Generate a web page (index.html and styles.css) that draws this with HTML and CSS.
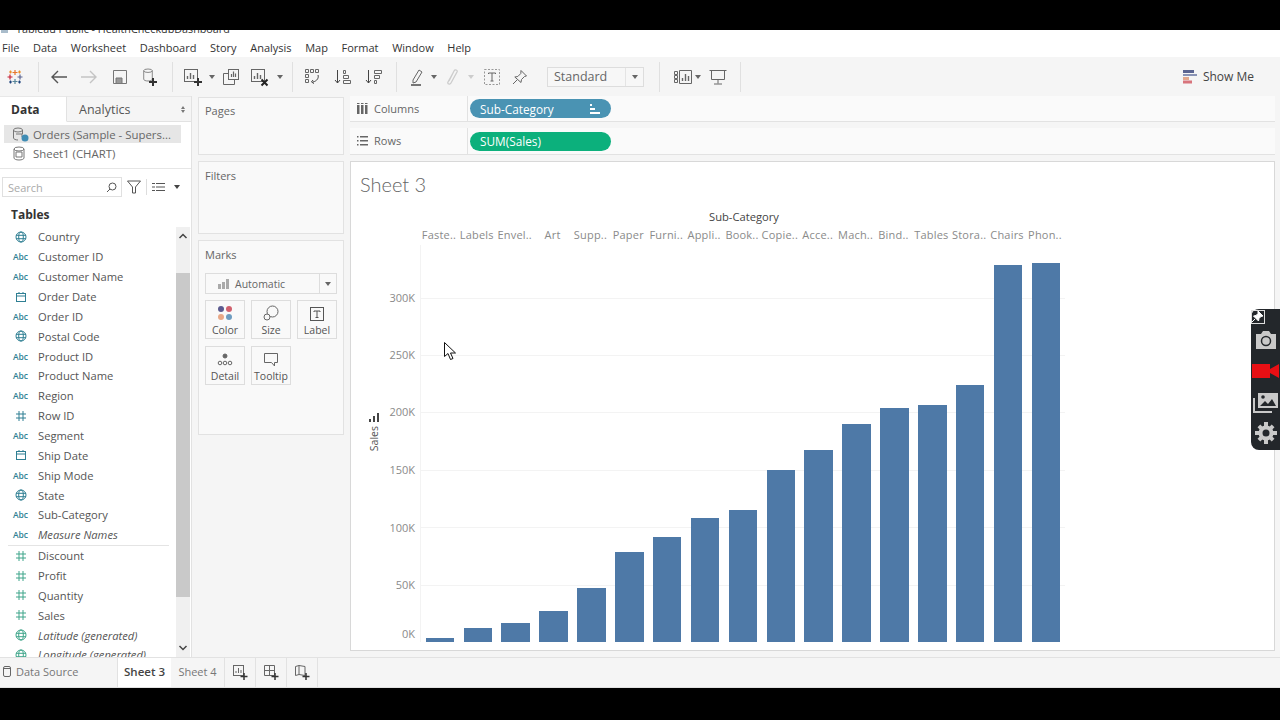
FILE: index.html
```html
<!DOCTYPE html>
<html lang="en">
<head>
    <meta charset="UTF-8">
    <title>Tableau Public - HealthCheckupDashboard</title>
    <link rel="stylesheet" href="styles.css">
</head>
<body>
    <svg class="defs" width="0" height="0">
        <symbol id="globe" viewBox="0 0 12 12"><g fill="none" stroke="currentColor"><circle cx="6" cy="6" r="5"/><ellipse cx="6" cy="6" rx="2.3" ry="5"/><path d="M1 4.3h10M1 7.7h10"/></g></symbol>
        <symbol id="cal" viewBox="0 0 12 12"><g fill="none" stroke="currentColor"><rect x="1.5" y="2.5" width="9" height="8"/><path d="M1.5 5h9M4 1v2M8 1v2"/></g></symbol>
        <symbol id="hash" viewBox="0 0 12 12"><path d="M4 1v10M8 1v10M1 4h10M1 8h10" fill="none" stroke="currentColor"/></symbol>
        <symbol id="sheet-plus" viewBox="0 0 20 20"><g fill="none" stroke="#666"><rect x="1.5" y="2.5" width="13" height="12"/></g><path d="M4.5 12V9M7.5 12V6M10.5 12V8" stroke="#666" stroke-width="1.4"/><path d="M15 11v8M11 15h8" stroke="#333" stroke-width="2"/></symbol>
        <symbol id="db" viewBox="0 0 14 16"><g fill="none" stroke="#777"><ellipse cx="7" cy="3" rx="5" ry="2"/><path d="M2 3v10c0 1 2 2 5 2s5-1 5-2V3"/></g></symbol>
    </svg>

    <div class="letterbox-top"></div>

    <div class="window">
        <div class="titlebar"><span class="title-icon"></span><div class="titlebar-text">Tableau Public - HealthCheckupDashboard</div></div>

        <nav class="menubar">
            <span>File</span><span>Data</span><span>Worksheet</span><span>Dashboard</span><span>Story</span><span>Analysis</span><span>Map</span><span>Format</span><span>Window</span><span>Help</span>
        </nav>

        <!-- Toolbar -->
        <div class="toolbar">
            <div class="tb">
                <svg width="16" height="16" viewBox="0 0 16 16" fill="none" stroke-width="1.2"><path d="M8 1v5M5.5 3.5h5" stroke="#e8762c"/><path d="M8 10v5M5.5 12.5h5" stroke="#59879b"/><path d="M3 5.5v5M.5 8h5" stroke="#c72035"/><path d="M13 5.5v5M10.5 8h5" stroke="#5b6591"/><path d="M3.5 1.5v3M2 3h3M12.5 1.5v3M11 3h3" stroke="#eb912b"/><path d="M3.5 11.5v3M2 13h3M12.5 11.5v3M11 13h3" stroke="#1f447e"/></svg>
            </div>
            <div class="sep sep-first"></div>
            <div class="tb tb-gap5"><svg width="18" height="14" viewBox="0 0 18 14" fill="none" stroke="#555" stroke-width="1.4"><path d="M17 7H2M8 1 2 7l6 6"/></svg></div>
            <div class="tb"><svg width="18" height="14" viewBox="0 0 18 14" fill="none" stroke="#c4c4c4" stroke-width="1.4"><path d="M1 7h15M10 1l6 6-6 6"/></svg></div>
            <div class="tb tb-gap1"><svg width="16" height="16" viewBox="0 0 16 16" fill="none" stroke="#777"><path d="M1.5 1.5h13v13h-13z"/><path d="M4 14V9h6v5" fill="#999"/></svg></div>
            <div class="tb"><svg width="17" height="18" viewBox="0 0 17 18"><use href="#db" width="12" height="14"/><path d="M11 10v8M7 14h8" stroke="#333" stroke-width="2"/></svg></div>
            <div class="sep sep-a"></div>
            <div class="tb tb-narrow tb-gap5"><svg width="20" height="20"><use href="#sheet-plus"/></svg></div>
            <div class="caret-box caret-box-small"><span class="caret"></span></div>
            <div class="tb tb-narrow"><svg width="18" height="18" viewBox="0 0 18 18" fill="none" stroke="#666"><rect x="6.5" y="1.5" width="10" height="10"/><path d="M6.5 5.5h-5v11h11v-5"/><path d="M9.5 9V6M11.5 9V3.5M13.5 9V5.5" stroke-width="1.2"/></svg></div>
            <div class="tb tb-narrow tb-gap1"><svg width="20" height="20" viewBox="0 0 20 20"><g fill="none" stroke="#666"><rect x="1.5" y="2.5" width="13" height="12"/></g><path d="M4.5 12V9M7.5 12V6M10.5 12V8" stroke="#666" stroke-width="1.4"/><path d="M11.5 12.5l6 6M17.5 12.5l-6 6" stroke="#222" stroke-width="2"/></svg></div>
            <div class="caret-box"><span class="caret"></span></div>
            <div class="sep sep-d"></div>
            <div class="tb tb-narrow"><svg width="17" height="17" viewBox="0 0 17 17" fill="none" stroke="#666"><path d="M1.5 1.5h3v3h-3zM6.5 1.5h3v3h-3zM11.5 1.5h3v3h-3zM1.5 6.5h3v3h-3zM1.5 11.5h3v3h-3z"/><path d="M14 7c1 3-1 6-5 7M9 12l-1.5 2L10 15.5" stroke="#444"/></svg></div>
            <div class="tb tb-gap2"><svg width="18" height="16" viewBox="0 0 18 16" fill="none" stroke="#666"><path d="M3.5 1v13M1 11l2.500 3L6 11" stroke="#444"/><path d="M9.5 1.5h2v3h-2zM9.5 6.5h5v3h-5zM9.5 11.5h7v3h-7z"/></svg></div>
            <div class="tb tb-gap1"><svg width="18" height="16" viewBox="0 0 18 16" fill="none" stroke="#666"><path d="M3.5 1v13M1 11l2.500 3L6 11" stroke="#444"/><path d="M9.5 1.5h7v3h-7zM9.5 6.5h5v3h-5zM9.5 11.5h2v3h-2z"/></svg></div>
            <div class="sep sep-b"></div>
            <div class="tb tb-pen tb-gap3"><svg width="14" height="18" viewBox="0 0 14 18" fill="none" stroke="#666"><path d="M3 12 9 2l3 2-6 10-3 1z"/><path d="M1 17h10" stroke="#555" stroke-width="1.6"/></svg></div>
            <div class="caret-box caret-box-small"><span class="caret"></span></div>
            <div class="tb tb-slim tb-gap3"><svg width="12" height="18" viewBox="0 0 12 18" fill="none" stroke="#ccc" stroke-width="1.3"><path d="M3 13 8 3c1-2 4-1 3 1l-6 11c-1 2-4 1-3-1l5-9"/></svg></div>
            <div class="caret-box tb-gap3"><span class="caret caret-off"></span></div>
            <div class="tb tb-slim tb-gap5"><svg width="16" height="16" viewBox="0 0 16 16" fill="none"><path d="M.5.5h15v15H.5z" stroke="#999" stroke-dasharray="2 1.5"/><path d="M4.5 5V4h7v1M8 4v8M6.5 12h3" stroke="#666"/></svg></div>
            <div class="tb tb-slim tb-gap8"><svg width="16" height="16" viewBox="0 0 16 16" fill="none" stroke="#666"><path d="M9 1.5 14.500 7l-2 .5-3 3-.5 3L2.800 8l3-.5 3-3zM5 11l-4 4"/></svg></div>
            <div class="std-select"><span>Standard</span><span class="std-arrow"><span class="caret"></span></span></div>
            <div class="sep sep-c"></div>
            <div class="tb tb-slim tb-gap8"><svg width="20" height="16" viewBox="0 0 20 16" fill="none" stroke="#666"><path d="M1.5 2.5h3v3h-3zM1.5 6.5h3v3h-3zM1.5 10.5h3v3h-3zM6.5 1.5h12v13h-12z"/><path d="M9.5 12V9M12.5 12V5M15.5 12V7" stroke-width="1.4"/></svg></div>
            <div class="caret-box caret-box-small"><span class="caret"></span></div>
            <div class="tb tb-narrow tb-gap1"><svg width="18" height="16" viewBox="0 0 18 16" fill="none" stroke="#666"><path d="M.5 1.500h17M2.500 1.500v9h13v-9M9 10.500v4M5 15h8"/></svg></div>
            <div class="sep sep-e"></div>
            <div class="show-me">
                <svg width="15" height="14" viewBox="0 0 15 14"><rect y="0" width="11" height="3" fill="#5b6591"/><rect y="4" width="14" height="2" fill="#8a94b5"/><rect y="7" width="6" height="3" fill="#e3a88c"/><rect y="10.5" width="9" height="3" fill="#d8747c"/></svg>
                <span>Show Me</span>
            </div>
        </div>

        <div class="workspace">
            <!-- Data pane -->
            <aside class="data-pane">
                <div class="pane-tabs">
                    <div class="pane-tab pane-tab-active">Data</div>
                    <div class="pane-tab">Analytics<span class="updown"></span></div>
                </div>
                <div class="sources">
                    <div class="source source-active">
                        <svg width="17" height="15" viewBox="0 0 17 15" fill="none" stroke="#777"><ellipse cx="6" cy="3" rx="4.5" ry="2"/><path d="M1.500 3v8c0 1 2 2 4.500 2M10.500 3v4M4 7h6v3"/><circle cx="13" cy="11" r="3.5" fill="#3f8cb4" stroke="none"/></svg>
                        <span>Orders (Sample - Supers...</span>
                    </div>
                    <div class="source">
                        <svg width="17" height="15" viewBox="0 0 17 15" fill="none" stroke="#777"><ellipse cx="7" cy="3" rx="5" ry="2"/><path d="M2 3v9c0 1 2 2 5 2s5-1 5-2V3M4 6h6v5H4z"/></svg>
                        <span>Sheet1 (CHART)</span>
                    </div>
                </div>
                <div class="search-row">
                    <div class="search-box"><span>Search</span>
                        <svg width="11" height="11" viewBox="0 0 11 11" fill="none" stroke="#555"><circle cx="6.5" cy="4.5" r="3.5"/><path d="M4 7 1 10"/></svg>
                    </div>
                    <svg class="filter-icon" width="14" height="14" viewBox="0 0 14 14" fill="none" stroke="#555"><path d="M.5 1h13L8.500 7v6h-3V7z"/></svg>
                    <span class="search-sep"></span>
                    <svg width="13" height="10" viewBox="0 0 13 10" stroke="#555"><path d="M0 1.500h3M0 5h3M0 8.500h3M4 1.500h9M4 5h9M4 8.500h9"/></svg>
                    <span class="caret caret-dark"></span>
                </div>
                <div class="tables-head">Tables</div>
                <div class="fields-wrap">
                    <ul class="fields">
                        <li><span class="fi dim"><svg width="12" height="12"><use href="#globe"/></svg></span>Country</li>
                        <li><span class="fi abc">Abc</span>Customer ID</li>
                        <li><span class="fi abc">Abc</span>Customer Name</li>
                        <li><span class="fi dim"><svg width="12" height="12"><use href="#cal"/></svg></span>Order Date</li>
                        <li><span class="fi abc">Abc</span>Order ID</li>
                        <li><span class="fi dim"><svg width="12" height="12"><use href="#globe"/></svg></span>Postal Code</li>
                        <li><span class="fi abc">Abc</span>Product ID</li>
                        <li><span class="fi abc">Abc</span>Product Name</li>
                        <li><span class="fi abc">Abc</span>Region</li>
                        <li><span class="fi dim"><svg width="12" height="12"><use href="#hash"/></svg></span>Row ID</li>
                        <li><span class="fi abc">Abc</span>Segment</li>
                        <li><span class="fi dim"><svg width="12" height="12"><use href="#cal"/></svg></span>Ship Date</li>
                        <li><span class="fi abc">Abc</span>Ship Mode</li>
                        <li><span class="fi dim"><svg width="12" height="12"><use href="#globe"/></svg></span>State</li>
                        <li><span class="fi abc">Abc</span>Sub-Category</li>
                        <li class="calc"><span class="fi abc">Abc</span>Measure Names</li>
                        <li class="field-divider"></li>
                        <li><span class="fi mea"><svg width="12" height="12"><use href="#hash"/></svg></span>Discount</li>
                        <li><span class="fi mea"><svg width="12" height="12"><use href="#hash"/></svg></span>Profit</li>
                        <li><span class="fi mea"><svg width="12" height="12"><use href="#hash"/></svg></span>Quantity</li>
                        <li><span class="fi mea"><svg width="12" height="12"><use href="#hash"/></svg></span>Sales</li>
                        <li class="calc"><span class="fi mea"><svg width="12" height="12"><use href="#globe"/></svg></span>Latitude (generated)</li>
                        <li class="calc"><span class="fi mea"><svg width="12" height="12"><use href="#globe"/></svg></span>Longitude (generated)</li>
                    </ul>
                    <div class="scrollbar">
                        <svg class="scroll-btn" width="14" height="18" viewBox="0 0 14 18" fill="none" stroke="#444" stroke-width="1.5"><path d="M3.500 11 7 7.500l3.500 3.500"/></svg>
                        <div class="scroll-track"><div class="scroll-thumb"></div></div>
                        <svg class="scroll-btn" width="14" height="18" viewBox="0 0 14 18" fill="none" stroke="#444" stroke-width="1.5"><path d="M3.500 7 7 10.500 10.500 7"/></svg>
                    </div>
                </div>
            </aside>

            <!-- Pages / Filters / Marks -->
            <div class="cards">
                <section class="card card-pages"><h3>Pages</h3></section>
                <section class="card card-filters"><h3>Filters</h3></section>
                <section class="card card-marks">
                    <h3>Marks</h3>
                    <div class="mark-select">
                        <svg width="12" height="10" viewBox="0 0 12 10" fill="#aaa"><rect x="0" y="5" width="3" height="5"/><rect x="4" y="3" width="3" height="7"/><rect x="8" y="0" width="3" height="10"/></svg>
                        <span class="mark-name">Automatic</span>
                        <span class="mark-arrow"><span class="caret"></span></span>
                    </div>
                    <div class="mark-grid">
                        <div class="mark-btn">
                            <svg width="16" height="16" viewBox="0 0 16 16"><circle cx="4" cy="4" r="3" fill="#5b5a8f"/><circle cx="12" cy="4" r="3" fill="#d0606d"/><circle cx="4" cy="12" r="3" fill="#e8a887"/><circle cx="12" cy="12" r="3" fill="#6d9cc0"/></svg>
                            <span>Color</span>
                        </div>
                        <div class="mark-btn">
                            <svg width="16" height="16" viewBox="0 0 16 16" fill="none" stroke="#666"><circle cx="9.5" cy="6.5" r="5.5"/><circle cx="4" cy="12" r="3" fill="#f9f9f9"/></svg>
                            <span>Size</span>
                        </div>
                        <div class="mark-btn">
                            <svg width="14" height="14" viewBox="0 0 14 14" fill="none" stroke="#555"><rect x=".5" y=".5" width="13" height="13"/><path d="M4 5V4h6v1M7 4v6.500M5.500 10.500h3"/></svg>
                            <span>Label</span>
                        </div>
                        <div class="mark-btn">
                            <svg width="16" height="14" viewBox="0 0 16 14" fill="none" stroke="#666"><circle cx="8" cy="3" r="2" fill="#666"/><circle cx="3" cy="10" r="1.8"/><circle cx="8" cy="10" r="1.8"/><circle cx="13" cy="10" r="1.8"/></svg>
                            <span>Detail</span>
                        </div>
                        <div class="mark-btn">
                            <svg width="16" height="14" viewBox="0 0 16 14" fill="none" stroke="#666"><path d="M1.500.5h13v9h-3v3.500l-3-3.500h-7z"/></svg>
                            <span>Tooltip</span>
                        </div>
                    </div>
                </section>
            </div>

            <!-- Shelves and view -->
            <main class="main">
                <div class="shelf">
                    <div class="shelf-label">
                        <svg width="11" height="11" viewBox="0 0 11 11" fill="#666"><rect x="0" y="2" width="2.5" height="9"/><rect x="4" y="2" width="2.5" height="9"/><rect x="8" y="2" width="2.5" height="9"/><rect x="0" y="0" width="2.5" height="1"/><rect x="4" y="0" width="2.5" height="1"/><rect x="8" y="0" width="2.5" height="1"/></svg>
                        Columns
                    </div>
                    <div class="pill pill-blue">Sub-Category
                        <svg width="11" height="10" viewBox="0 0 11 10" fill="#fff"><rect width="2" height="2"/><rect y="4" width="5" height="2"/><rect y="8" width="10" height="2"/></svg>
                    </div>
                </div>
                <div class="shelf shelf-rows">
                    <div class="shelf-label">
                        <svg width="11" height="11" viewBox="0 0 11 11" fill="#666"><rect y="1" width="1.5" height="1.5"/><rect y="5" width="1.5" height="1.5"/><rect y="9" width="1.5" height="1.5"/><rect x="3" y="1" width="8" height="1.5"/><rect x="3" y="5" width="8" height="1.5"/><rect x="3" y="9" width="8" height="1.5"/></svg>
                        Rows
                    </div>
                    <div class="pill pill-green">SUM(Sales)</div>
                </div>

                <div class="view">
                    <div class="view-title">Sheet 3</div>
                    <div class="chart">
                        <div class="chart-side">
                            <div class="axis-title">
                                <svg width="11" height="9" viewBox="0 0 11 9" fill="#444"><rect y="6" width="2" height="3"/><rect x="4" y="3" width="2" height="6"/><rect x="8" width="2" height="9"/></svg>
                                <span>Sales</span>
                            </div>
                            <span class="tick" style="top:46px">300K</span>
                            <span class="tick" style="top:103px">250K</span>
                            <span class="tick" style="top:160px">200K</span>
                            <span class="tick" style="top:218px">150K</span>
                            <span class="tick" style="top:276px">100K</span>
                            <span class="tick" style="top:333px">50K</span>
                            <span class="tick" style="top:382px">0K</span>
                        </div>
                        <div class="chart-body">
                            <div class="chart-head">Sub-Category</div>
                            <div class="cats">
                                <span>Faste..</span><span>Labels</span><span>Envel..</span><span>Art</span><span>Supp..</span><span>Paper</span><span>Furni..</span><span>Appli..</span><span>Book..</span><span>Copie..</span><span>Acce..</span><span>Mach..</span><span>Bind..</span><span>Tables</span><span>Stora..</span><span>Chairs</span><span>Phon..</span>
                            </div>
                            <div class="plot">
                                <i class="grid-line" style="top:53px"></i>
                                <i class="grid-line" style="top:110px"></i>
                                <i class="grid-line" style="top:167px"></i>
                                <i class="grid-line" style="top:225px"></i>
                                <i class="grid-line" style="top:282px"></i>
                                <i class="grid-line" style="top:340px"></i>
                                <div class="bar-cell"><b style="height:4px"></b></div>
                                <div class="bar-cell"><b style="height:14px"></b></div>
                                <div class="bar-cell"><b style="height:19px"></b></div>
                                <div class="bar-cell"><b style="height:31px"></b></div>
                                <div class="bar-cell"><b style="height:54px"></b></div>
                                <div class="bar-cell"><b style="height:90px"></b></div>
                                <div class="bar-cell"><b style="height:105px"></b></div>
                                <div class="bar-cell"><b style="height:124px"></b></div>
                                <div class="bar-cell"><b style="height:132px"></b></div>
                                <div class="bar-cell"><b style="height:172px"></b></div>
                                <div class="bar-cell"><b style="height:192px"></b></div>
                                <div class="bar-cell"><b style="height:218px"></b></div>
                                <div class="bar-cell"><b style="height:234px"></b></div>
                                <div class="bar-cell"><b style="height:237px"></b></div>
                                <div class="bar-cell"><b style="height:257px"></b></div>
                                <div class="bar-cell"><b style="height:377px"></b></div>
                                <div class="bar-cell"><b style="height:379px"></b></div>
                            </div>
                        </div>
                    </div>
                </div>
            </main>
        </div>

        <!-- Sheet tabs -->
        <div class="tabbar">
            <div class="tab tab-source">
                <svg width="8" height="11" viewBox="0 0 8 11" fill="none" stroke="#666"><rect x=".5" y=".5" width="7" height="10" rx="1.5"/><path d="M.5 2.500h7"/></svg>
                Data Source
            </div>
            <div class="tab tab-active">Sheet 3</div>
            <div class="tab tab-sheet">Sheet 4</div>
            <div class="tab-add">
                <svg width="15" height="15" viewBox="0 0 15 15" fill="none" stroke="#666"><rect x=".5" y=".5" width="10" height="10"/><path d="M3 8V6M5.500 8V3M8 8V5"/><path d="M11 8v7M7.500 11.500h7" stroke="#333" stroke-width="1.5"/></svg>
            </div>
            <div class="tab-add">
                <svg width="15" height="15" viewBox="0 0 15 15" fill="none" stroke="#666"><path d="M.5.5h10v10H.5zM5.500.5v10M.5 5.500h10"/><path d="M11 8v7M7.500 11.500h7" stroke="#333" stroke-width="1.5"/></svg>
            </div>
            <div class="tab-add">
                <svg width="15" height="15" viewBox="0 0 15 15" fill="none" stroke="#666"><path d="M.5 1.500 4 .5l6 1v9l-6-1-3.500 1zM4 .5v9"/><path d="M11 8v7M7.500 11.500h7" stroke="#333" stroke-width="1.5"/></svg>
            </div>
        </div>
    </div>

    <div class="letterbox-bottom"></div>

    <!-- Screen recorder widget and mouse pointer sit over the window -->
    <div class="recorder">
        <div class="rec-pin"><svg width="11" height="11" viewBox="0 0 11 11" fill="#fff" stroke="#fff"><path d="M6 0l5 5-2 .5-2 2-.5 2.500L1.500 5l2.500-.5 2-2zM3 8l-3 3"/></svg></div>
        <svg width="22" height="20" viewBox="0 0 22 20"><path d="M1 4h5l2-3h6l2 3h5v15H1z" fill="#c9c9c9"/><circle cx="11" cy="11" r="4.5" fill="none" stroke="#23272b" stroke-width="1.5"/></svg>
        <svg width="27" height="16" viewBox="0 0 27 16"><path d="M0 1h18v14H0zM18 6l9-5v14l-9-5z" fill="#e80f14"/></svg>
        <svg width="25" height="21" viewBox="0 0 25 21" fill="none"><path d="M1 6v14h18" stroke="#c9c9c9" stroke-width="2"/><path d="M5 1h20v15H5z" fill="#c9c9c9"/><circle cx="10" cy="5" r="1.8" fill="#23272b"/><path d="M7 14l5-5 3 3 4-5 4 7z" fill="#23272b"/></svg>
        <svg class="rec-gear" width="22" height="22" viewBox="0 0 22 22"><circle cx="11" cy="11" r="5.5" fill="none" stroke="#c9c9c9" stroke-width="4"/><path d="M9 0h4v4H9zM9 18h4v4H9zM0 9h4v4H0zM18 9h4v4h-4zM2.500 5.300 5.300 2.500l2.500 2.500-2.800 2.800zM14.200 17l2.800-2.800 2.500 2.500-2.800 2.800zM2.500 16.700 5 14.200 7.800 17l-2.500 2.500zM14.200 5l2.500-2.500 2.800 2.800L17 7.800z" fill="#c9c9c9"/></svg>
    </div>
    <svg class="pointer" width="12" height="18" viewBox="0 0 12 18"><path d="M.5.500v14l3.500-3 2.500 6 2.500-1-2.500-5.500h5z" fill="#fff" stroke="#111"/></svg>
</body>
</html>
```

FILE: styles.css
```css
/* Page */
html, body {
    margin: 0;
    padding: 0;
    height: 720px;
    overflow: hidden;
    background-color: #000;
    font-family: "Open Sans", "Noto Sans", sans-serif;
    color: #555;
}

.defs {
    position: absolute;
}

.letterbox-top {
    height: 30px;
    background-color: #000;
}

.letterbox-bottom {
    height: 32px;
    background-color: #000;
}

.window {
    height: 658px;
    display: flex;
    flex-direction: column;
    background-color: #fff;
    overflow: hidden;
}

/* Title and menu */
.titlebar {
    height: 3px;
    flex: none;
    display: flex;
    gap: 8px;
    overflow: hidden;
    padding-left: 1px;
}

.title-icon {
    width: 7px;
    height: 3px;
    background-color: #a9bccb;
}

.titlebar-text {
    margin-top: -9px;
    font-size: 10.75px;
    line-height: 16px;
    color: #333;
}

.menubar {
    height: 24px;
    flex: none;
    box-sizing: border-box;
    display: flex;
    align-items: center;
    gap: 13.6px;
    padding: 5px 0 0 2px;
    font-size: 11px;
    color: #333;
}

/* Toolbar */
.toolbar {
    height: 39px;
    flex: none;
    display: flex;
    align-items: center;
    background-color: #f5f5f5;
}

.tb {
    width: 30px;
    height: 24px;
    flex: none;
    display: flex;
    align-items: center;
    justify-content: center;
}

.tb-narrow { width: 28px; }
.tb-pen { width: 24px; }
.tb-slim { width: 20px; }
.tb-gap1 { margin-left: 1px; }
.tb-gap2 { margin-left: 2px; }
.tb-gap3 { margin-left: 3px; }
.tb-gap5 { margin-left: 5px; }
.tb-gap8 { margin-left: 8px; }

.sep {
    width: 1px;
    height: 30px;
    flex: none;
    background-color: #e0e0e0;
}

.sep-first { margin-left: 8px; }
.sep-a { margin: 0 1px 0 7px; }
.sep-b { margin: 0 5px 0 7px; }
.sep-c { margin: 0 5px 0 15px; }
.sep-d { margin: 0 5px 0 6px; }
.sep-e { margin-left: 8px; }

.caret-box {
    width: 12px;
    flex: none;
    display: flex;
    justify-content: center;
}

.caret-box-small { width: 10px; }

.caret {
    width: 0;
    height: 0;
    display: inline-block;
    border-left: 3px solid transparent;
    border-right: 3px solid transparent;
    border-top: 4px solid #666;
}

.caret-off { border-top-color: #ccc; }
.caret-dark { margin-left: 9px; border-top-color: #444; }

.std-select {
    width: 97px;
    height: 20px;
    flex: none;
    margin-left: 17px;
    display: flex;
    align-items: center;
    justify-content: space-between;
    padding-left: 6px;
    box-sizing: border-box;
    border: 1px solid #ddd;
    background-color: #f7f7f7;
    font-size: 12.5px;
    color: #666;
}

.std-arrow {
    width: 17px;
    height: 100%;
    display: flex;
    align-items: center;
    justify-content: center;
    border-left: 1px solid #e4e4e4;
}

.show-me {
    margin-left: auto;
    margin-right: 26px;
    display: flex;
    align-items: center;
    gap: 5px;
    font-size: 12px;
    color: #444;
}

/* Workspace */
.workspace {
    height: 561px;
    flex: none;
    display: flex;
    background-color: #f5f5f5;
}

/* Data pane */
.data-pane {
    width: 191px;
    flex: none;
    display: flex;
    flex-direction: column;
    background-color: #fff;
    border-right: 1px solid #e2e2e2;
}

.pane-tabs {
    height: 26px;
    flex: none;
    display: flex;
    font-size: 12.5px;
}

.pane-tab {
    flex: 1;
    position: relative;
    padding-left: 12px;
    line-height: 25px;
    background-color: #f5f5f5;
    border-bottom: 1px solid #e2e2e2;
    border-top: 1px solid #e8e8e8;
    color: #555;
}

.pane-tab-active {
    flex: none;
    width: 55px;
    padding-left: 11px;
    background-color: #fff;
    border-bottom-color: #fff;
    border-right: 1px solid #e2e2e2;
    font-size: 12px;
    font-weight: 700;
    color: #333;
}

.updown {
    position: absolute;
    right: 6px;
    top: 9px;
    width: 0;
    height: 0;
    border-left: 2.5px solid transparent;
    border-right: 2.5px solid transparent;
    border-bottom: 3px solid #777;
}

.updown::after {
    content: "";
    position: absolute;
    left: -2.5px;
    top: 4px;
    border-left: 2.5px solid transparent;
    border-right: 2.5px solid transparent;
    border-top: 3px solid #777;
}

.sources {
    height: 47px;
    flex: none;
    box-sizing: border-box;
    padding: 3px 10px 0 4px;
    border-bottom: 1px solid #e6e6e6;
    font-size: 11.4px;
}

.source {
    height: 18px;
    margin-bottom: 1px;
    display: flex;
    align-items: center;
    gap: 4px;
    padding-left: 8px;
    color: #666;
}

.source-active {
    background-color: #e6e6e6;
}

.search-row {
    height: 20px;
    flex: none;
    margin-top: 8px;
    display: flex;
    align-items: center;
    padding-left: 2px;
}

.search-box {
    width: 120px;
    height: 20px;
    flex: none;
    box-sizing: border-box;
    display: flex;
    align-items: center;
    justify-content: space-between;
    padding: 0 4px 0 5px;
    border: 1px solid #e0e0e0;
    font-size: 11px;
    color: #aaa;
}

.filter-icon { margin-left: 5px; }

.search-sep {
    width: 1px;
    height: 16px;
    margin: 0 5px;
    background-color: #ddd;
}

.tables-head {
    height: 30px;
    flex: none;
    padding-left: 11px;
    line-height: 36px;
    font-size: 12px;
    font-weight: 700;
    color: #333;
}

.fields-wrap {
    flex: 1;
    min-height: 0;
    display: flex;
}

.fields {
    width: 176px;
    margin: 0;
    padding: 0;
    list-style: none;
    overflow: hidden;
    font-size: 11.2px;
    color: #555;
}

.fields li {
    height: 19.87px;
    display: flex;
    align-items: center;
    white-space: nowrap;
}

.fields .field-divider {
    height: 0;
    width: 161px;
    margin-left: 8px;
    border-top: 1px solid #e4e4e4;
}

.fields .calc { font-style: italic; }

.fi {
    width: 38px;
    flex: none;
    display: flex;
    justify-content: center;
    padding-left: 3px;
    box-sizing: border-box;
    font-style: normal;
}

.dim { color: #2f7f93; }
.mea { color: #3fa58a; }

.abc {
    font-size: 8.5px;
    font-weight: 600;
    color: #2f7f93;
}

.scrollbar {
    width: 14px;
    flex: none;
    display: flex;
    flex-direction: column;
    background-color: #f0f0f0;
}

.scroll-btn { flex: none; }

.scroll-track {
    flex: 1;
    padding-top: 28px;
}

.scroll-thumb {
    height: 324px;
    background-color: #c9c9c9;
}

/* Cards column */
.cards {
    width: 146px;
    flex: none;
    margin-left: 6px;
    padding-top: 1px;
    display: flex;
    flex-direction: column;
    gap: 6px;
}

.card {
    box-sizing: border-box;
    background-color: #f9f9f9;
    border: 1px solid #e2e2e2;
    padding: 5px 6px 6px;
}

.card h3 {
    margin: 0;
    font-size: 11px;
    line-height: 16px;
    font-weight: 400;
    color: #666;
}

.card-pages { height: 58px; }
.card-filters { height: 73px; padding-top: 6px; }
.card-marks { height: 195px; padding-top: 6px; }

.mark-select {
    height: 19px;
    margin-top: 10px;
    display: flex;
    align-items: center;
    padding-left: 12px;
    border: 1px solid #ddd;
    font-size: 10.5px;
    color: #666;
}

.mark-name {
    flex: 1;
    margin-left: 5px;
}

.mark-arrow {
    width: 16px;
    height: 100%;
    display: flex;
    align-items: center;
    justify-content: center;
    border-left: 1px solid #ddd;
}

.mark-grid {
    display: grid;
    grid-template-columns: 40px 40px 40px;
    grid-auto-rows: 39px;
    column-gap: 6px;
    row-gap: 7px;
    margin-top: 6px;
}

.mark-btn {
    box-sizing: border-box;
    display: flex;
    flex-direction: column;
    align-items: center;
    justify-content: flex-end;
    gap: 2px;
    padding-bottom: 1px;
    border: 1px solid #ddd;
    font-size: 10.5px;
    color: #555;
}

/* Shelves */
.main {
    width: 925px;
    flex: none;
    margin-left: 6px;
    display: flex;
    flex-direction: column;
}

.shelf {
    height: 26px;
    flex: none;
    display: flex;
    align-items: center;
    box-sizing: border-box;
    background-color: #fafafa;
    border-bottom: 1px solid #e2e2e2;
}

.shelf-rows {
    height: 27px;
    margin-top: 6px;
}

.shelf-rows .shelf-label {
    padding-bottom: 2px;
}

.shelf-label {
    width: 118px;
    height: 100%;
    flex: none;
    display: flex;
    align-items: center;
    gap: 6px;
    padding-left: 7px;
    box-sizing: border-box;
    border-right: 1px solid #e2e2e2;
    font-size: 11px;
    color: #666;
}

.pill {
    width: 141px;
    height: 19px;
    margin-left: 2px;
    box-sizing: border-box;
    display: flex;
    align-items: center;
    justify-content: space-between;
    padding: 0 10px;
    border-radius: 10px;
    font-size: 11.8px;
    color: #fff;
}

.pill-blue { background-color: #4a93b3; }
.pill-green { background-color: #0cb07c; }

/* View */
.view {
    height: 490px;
    flex: none;
    margin-top: 6px;
    box-sizing: border-box;
    background-color: #fff;
    border: 1px solid #d8d8d8;
    overflow: hidden;
}

.view-title {
    height: 47px;
    padding-left: 9px;
    line-height: 44px;
    font-family: "Lato", "Open Sans", sans-serif;
    font-size: 20px;
    font-weight: 300;
    color: #666;
}

.chart {
    display: flex;
}

.chart-side {
    width: 69px;
    flex: none;
    position: relative;
    margin-top: 36px;
    height: 397px;
}

.tick {
    position: absolute;
    right: 5px;
    font-size: 11px;
    line-height: 13px;
    color: #8a8a8a;
}

.axis-title {
    position: absolute;
    left: 16px;
    top: 168px;
    display: flex;
    flex-direction: column;
    align-items: center;
    gap: 4px;
    font-size: 10.5px;
    font-weight: 500;
    color: #555;
}

.axis-title span {
    writing-mode: vertical-rl;
    transform: rotate(180deg);
}

.chart-head {
    height: 16px;
    width: 644px;
    padding-left: 2px;
    text-align: center;
    font-size: 11.2px;
    font-weight: 500;
    line-height: 16px;
    color: #444;
}

.cats {
    display: flex;
    height: 18px;
    margin-bottom: 2px;
    align-items: center;
    width: 644px;
    font-size: 11px;
    letter-spacing: 0.2px;
    color: #8a8a8a;
}

.cats span {
    width: 37.88px;
    flex: none;
    text-align: center;
    white-space: nowrap;
}

.plot {
    position: relative;
    width: 644px;
    height: 397px;
    display: flex;
    align-items: flex-end;
    border-left: 1px solid #f3f3f3;
    box-sizing: border-box;
}

.grid-line {
    position: absolute;
    left: 0;
    right: -1px;
    height: 1px;
    background-color: #f3f3f3;
}

.bar-cell {
    width: 37.88px;
    flex: none;
    display: flex;
    justify-content: center;
    position: relative;
}

.bar-cell b {
    display: block;
    width: 28.5px;
    background-color: #4e79a7;
}

/* Bottom tabs */
.tabbar {
    height: 29px;
    flex: none;
    display: flex;
    background-color: #f5f5f5;
    border-top: 1px solid #e2e2e2;
    border-bottom: 1px solid #e2e2e2;
    font-size: 11px;
    color: #777;
}

.tab {
    display: flex;
    align-items: center;
    justify-content: center;
    height: 100%;
    padding-bottom: 2px;
    box-sizing: border-box;
}

.tab-source {
    width: 117px;
    gap: 5px;
    justify-content: flex-start;
    padding-left: 3px;
}

.tab-active {
    width: 54px;
    background-color: #fff;
    font-size: 11.5px;
    font-weight: 600;
    color: #444;
    border-left: 1px solid #e2e2e2;
}

.tab-sheet {
    width: 54px;
    border-right: 1px solid #e2e2e2;
}

.tab-add {
    width: 30px;
    display: flex;
    align-items: center;
    justify-content: center;
    border-right: 1px solid #e2e2e2;
}

/* Overlays */
.recorder {
    position: absolute;
    right: 0;
    top: 309px;
    width: 29px;
    height: 141px;
    box-sizing: border-box;
    padding-top: 21px;
    display: flex;
    flex-direction: column;
    align-items: center;
    gap: 13px;
    background-color: #23272b;
    border-radius: 8px 0 0 8px;
}

.rec-pin {
    position: absolute;
    left: 1px;
    top: 2px;
    width: 12px;
    height: 12px;
    outline: 1px solid #ddd;
    display: flex;
}

.rec-gear { margin-top: -4px; }

.pointer {
    position: absolute;
    left: 444px;
    top: 342px;
}
```
